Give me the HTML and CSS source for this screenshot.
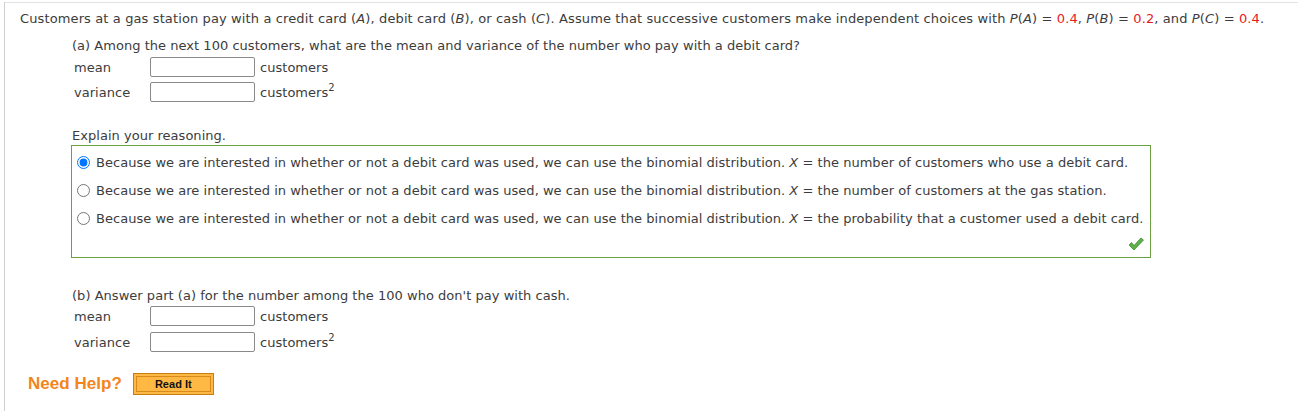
FILE: index.html
```html
<!DOCTYPE html>
<html>
<head>
<meta charset="utf-8">
<link rel="stylesheet" href="styles.css">
</head>
<body>
<div class="page">
  <p class="stem">Customers at a gas station pay with a credit card (<i>A</i>), debit card (<i>B</i>), or cash (<i>C</i>). Assume that successive customers make independent choices with <i>P</i>(<i>A</i>) = <span class="red">0.4</span>, <i>P</i>(<i>B</i>) = <span class="red">0.2</span>, and <i>P</i>(<i>C</i>) = <span class="red">0.4</span>.</p>
  <div class="part">
    <p class="q">(a) Among the next 100 customers, what are the mean and variance of the number who pay with a debit card?</p>
    <div class="row row-a1"><span class="lbl">mean</span><input class="box" type="text"><span class="unit">customers</span></div>
    <div class="row row-a2"><span class="lbl">variance</span><input class="box" type="text"><span class="unit">customers<sup>2</sup></span></div>
    <p class="explain">Explain your reasoning.</p>
    <div class="choices">
      <label class="choice"><input type="radio" name="r" checked><span>Because we are interested in whether or not a debit card was used, we can use the binomial distribution. <i>X</i> = the number of customers who use a debit card.</span></label>
      <label class="choice"><input type="radio" name="r"><span>Because we are interested in whether or not a debit card was used, we can use the binomial distribution. <i>X</i> = the number of customers at the gas station.</span></label>
      <label class="choice"><input type="radio" name="r"><span>Because we are interested in whether or not a debit card was used, we can use the binomial distribution. <i>X</i> = the probability that a customer used a debit card.</span></label>
      <div class="checkrow"><svg class="check" width="16" height="14" viewBox="0 0 16 14"><path d="M1 8 L3.5 5.5 L6 8.5 L13 1 L15.5 3 L6 13 Z" fill="#5fb04a" stroke="#3f8f33" stroke-width="0.8" stroke-linejoin="round"/></svg></div>
    </div>
    <p class="q qb">(b) Answer part (a) for the number among the 100 who don't pay with cash.</p>
    <div class="row row-b1"><span class="lbl">mean</span><input class="box" type="text"><span class="unit">customers</span></div>
    <div class="row row-b2"><span class="lbl">variance</span><input class="box" type="text"><span class="unit">customers<sup>2</sup></span></div>
  </div>
  <div class="help">
    <span class="need">Need Help?</span>
    <span class="btn"><span class="btn-in">Read It</span></span>
  </div>
</div>
</body>
</html>
```
FILE: styles.css
```css
html, body { margin: 0; padding: 0; background: #fff; }
body { font-family: "DejaVu Sans", Verdana, sans-serif; font-size: 13px; letter-spacing: 0.03px; color: #3c3c3c; }
.page {
  margin: 2px 0 0 4px;
  border-top: 1px solid #e2e2e2;
  border-left: 1px solid #cfcfcf;
  height: 420px;
  padding: 0 0 0 15px;
}
p { margin: 0; }
.stem { line-height: 20px; padding-top: 6px; letter-spacing: 0.12px; }
.red { color: #e8191f; }
.part { padding-left: 52px; }
.q { line-height: 20px; margin-top: 7px; }
.row { display: flex; align-items: center; height: 20px; }
.row-a1 { margin-top: 1px; }
.row-a2 { margin-top: 5px; }
.row-b1 { margin-top: 0; }
.row-b2 { margin-top: 6px; }
.lbl { width: 76px; padding-left: 2px; }
.box {
  width: 105px; height: 20px; box-sizing: border-box;
  border: 1px solid #8a8a8a; border-radius: 2px; margin: 0; padding: 0;
}
.unit { margin-left: 5px; }
sup { font-size: 10px; line-height: 0; vertical-align: 6px; }
.explain { margin-top: 26px; margin-bottom: 1px; line-height: 16px; }
.choices {
  border: 1px solid #6aa03f;
  width: 1078px;
  margin-left: -1px;
  padding-top: 2px;
}
.choice { display: flex; align-items: center; height: 28px; }
.choice input { margin: 0 6px 0 5px; width: 13px; height: 13px; }
.checkrow { display: flex; justify-content: flex-end; padding: 5px 6px 6px 0; height: 14px; }
.qb { margin-top: 28px; }
.help { display: flex; align-items: center; margin-top: 21px; margin-left: 8px; }
.need { font-family: "Liberation Sans", Arial, sans-serif; font-weight: bold; font-size: 17px; color: #f3861b; }
.btn {
  margin-left: 11px; border: 1px solid #c77c14; background: #ffb843;
  padding: 2px; width: 75px; height: 16px; display: flex;
}
.btn-in {
  flex: 1; border: 1px solid #d88a1c; display: flex; align-items: center; justify-content: center;
  font-family: "Liberation Sans", Arial, sans-serif; font-weight: bold; font-size: 11px; color: #111;
}
```
